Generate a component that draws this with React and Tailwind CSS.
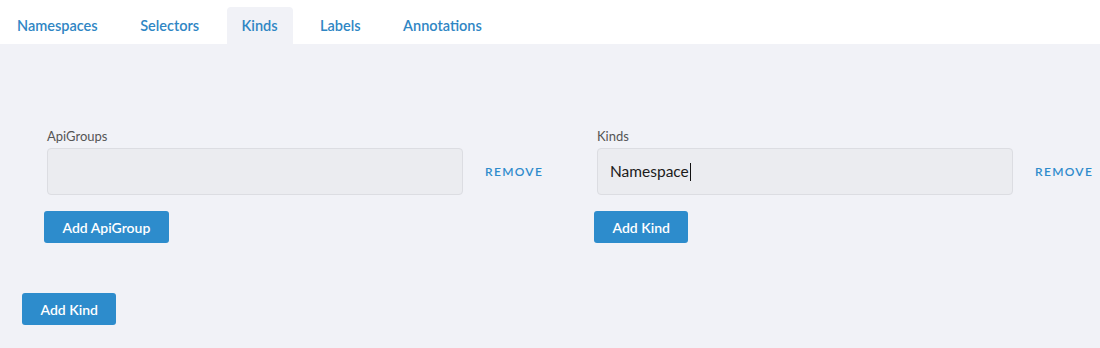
import React from 'react';

const tabs = ['Namespaces', 'Selectors', 'Kinds', 'Labels', 'Annotations'];

function Field({ label, value }) {
  return (
    <div className="w-[550px] shrink-0">
      <div className="pl-[3px] text-[13px] leading-[16px] text-[#555]">{label}</div>
      <div className="mt-[4px] flex items-center">
        <div className="ml-[3px] h-[47px] w-[416px] rounded-[4px] border border-[#dcdde2] bg-[#ebecf0] flex items-center pl-[12px] text-[15.5px] text-[#1b1b1b]">
          {value && (
            <>
              <span>{value}</span>
              <span className="ml-[1px] inline-block h-[18px] w-px bg-[#111]" />
            </>
          )}
        </div>
        <button className="ml-[22px] text-[12px] font-semibold tracking-[1.3px] text-[#2e8bcc]">REMOVE</button>
      </div>
      <button className="mt-[16px] h-[32px] rounded-[3px] bg-[#2d8ccc] px-[18.5px] text-[14px] font-semibold text-white">
        Add {label === 'Kinds' ? 'Kind' : 'ApiGroup'}
      </button>
    </div>
  );
}

export default function App() {
  return (
    <div className="h-[348px] w-[1100px] overflow-hidden bg-[#f1f2f7]" style={{ fontFamily: 'Lato, "Noto Sans", sans-serif' }}>
      <div className="flex h-[44px] items-end gap-[12.5px] bg-white pl-[2px]">
        {tabs.map((t) => (
          <div
            key={t}
            className={
              'flex h-[37px] items-center rounded-t-[4px] px-[15px] pt-[1px] text-[14.5px] font-semibold text-[#2f86c4] ' +
              (t === 'Kinds' ? 'bg-[#f1f2f7]' : '')
            }
          >
            {t}
          </div>
        ))}
      </div>
      <div className="pl-[44px] pt-[84px] flex">
        <Field label="ApiGroups" />
        <Field label="Kinds" value="Namespace" />
      </div>
      <div className="pl-[22px] pt-[50px]">
        <button className="h-[32px] rounded-[3px] bg-[#2d8ccc] px-[18.5px] text-[14px] font-semibold text-white">Add Kind</button>
      </div>
    </div>
  );
}
